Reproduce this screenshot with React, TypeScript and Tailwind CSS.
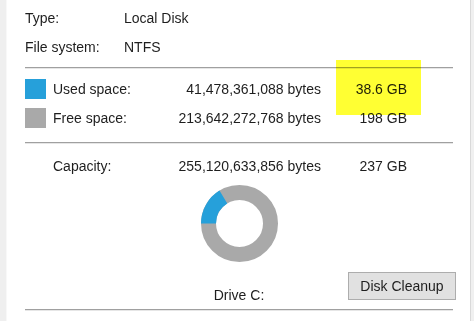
import React from "react";

const USED = 41478361088;
const TOTAL = 255120633856;

function Donut() {
  const r = 31;
  const c = 2 * Math.PI * r;
  const used = (USED / TOTAL) * c;
  return (
    <svg width="77" height="77" viewBox="0 0 77 77">
      <circle cx="38.5" cy="38.5" r={r} fill="none" stroke="#a9a9a9" strokeWidth="15" />
      <circle
        cx="38.5"
        cy="38.5"
        r={r}
        fill="none"
        stroke="#26a0da"
        strokeWidth="15"
        strokeDasharray={`${used} ${c}`}
        transform="rotate(180 38.5 38.5)"
      />
    </svg>
  );
}

function Rule() {
  return <div className="h-[2px] border-t border-t-[#a0a0a0] border-b border-b-[#e6e6e6]" />;
}

function SpaceRow({
  swatch,
  label,
  bytes,
  gb,
  className = "",
}: {
  swatch?: string;
  label: string;
  bytes: string;
  gb: string;
  className?: string;
}) {
  return (
    <div className={`flex h-[20px] items-center ${className}`}>
      {swatch ? (
        <div className={`h-[20px] w-[21px] ${swatch}`} />
      ) : (
        <div className="w-[21px]" />
      )}
      <div className="ml-[7px] w-[100px]">{label}</div>
      <div className="w-[168px] text-right">{bytes}</div>
      <div className="w-[86px] text-right">{gb}</div>
    </div>
  );
}

export default function App() {
  return (
    <div
      className="relative flex h-[321px] w-[474px] overflow-hidden bg-white text-[14px] text-[#1e1e1e]"
      style={{ fontFamily: '"Liberation Sans", Arial, sans-serif' }}
    >
      {/* left window edge */}
      <div className="w-[7px] border-r border-r-[#f8f8f8] bg-[#efefef]" />

      <main className="flex-1 pl-[18px] pr-[17px] pt-[7px]">
        <div className="flex h-[22px] items-center">
          <div className="w-[99px]">Type:</div>
          <div>Local Disk</div>
        </div>
        <div className="mt-[7px] flex h-[22px] items-center">
          <div className="w-[99px]">File system:</div>
          <div>NTFS</div>
        </div>

        <div className="mt-[9px]">
          <Rule />
        </div>

        <SpaceRow
          className="mt-[10px]"
          swatch="bg-[#26a0da]"
          label="Used space:"
          bytes="41,478,361,088 bytes"
          gb="38.6 GB"
        />
        <SpaceRow
          className="mt-[9px]"
          swatch="bg-[#a9a9a9]"
          label="Free space:"
          bytes="213,642,272,768 bytes"
          gb="198 GB"
        />

        <div className="mt-[14px]">
          <Rule />
        </div>

        <SpaceRow
          className="mt-[11px] h-[22px]"
          label="Capacity:"
          bytes="255,120,633,856 bytes"
          gb="237 GB"
        />

        <div className="mt-[8px] flex justify-center">
          <Donut />
        </div>

        <div className="mt-[10px] grid grid-cols-[1fr_auto_1fr] items-start">
          <div />
          <div className="mt-[14px] leading-[18px]">Drive C:</div>
          <button className="-mr-[3px] h-[28px] w-[108px] justify-self-end border border-[#adadad] bg-[#e1e1e1] text-[14px] text-[#1e1e1e]">
            Disk Cleanup
          </button>
        </div>

        <div className="mt-[5px]">
          <Rule />
        </div>
      </main>

      {/* right window edge */}
      <div className="w-[4px] border-l border-l-[#d9d9d9] bg-[#f0f0f0]" />

      {/* highlighter mark */}
      <div className="pointer-events-none absolute left-[336px] top-[60px] h-[55px] w-[85px] bg-[#ffff33] mix-blend-multiply" />
    </div>
  );
}
